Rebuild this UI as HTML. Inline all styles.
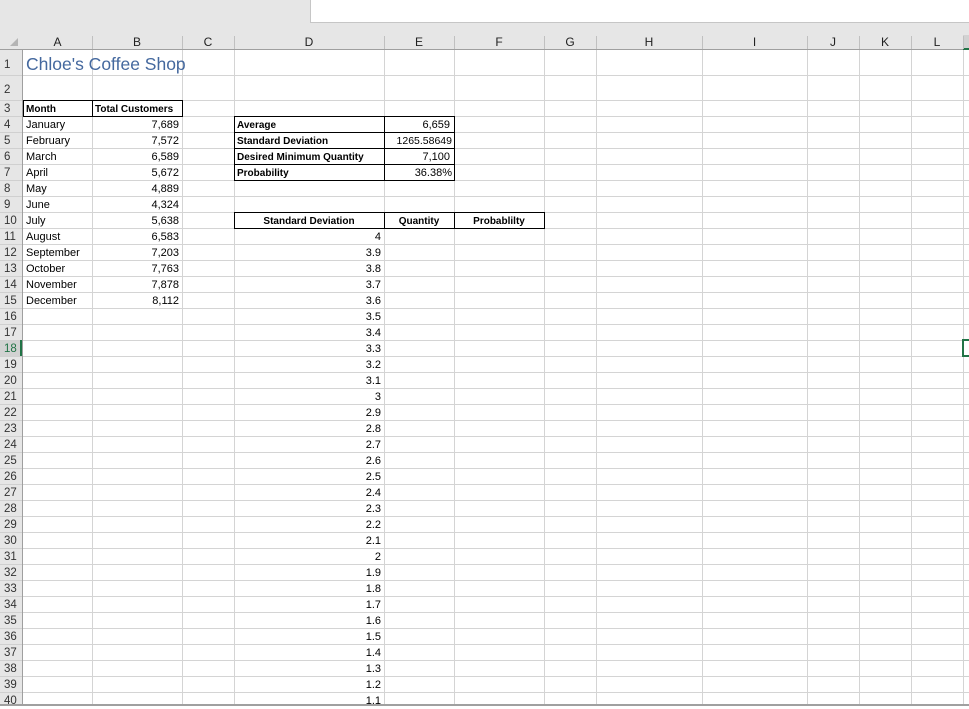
<!DOCTYPE html>
<html><head><meta charset="utf-8"><style>
*{margin:0;padding:0;box-sizing:border-box}
body{width:969px;height:706px;overflow:hidden;background:#fff;position:relative;font-family:"Liberation Sans",Arial,sans-serif;font-size:11px;color:#000}
.a{position:absolute}
.v{position:absolute;top:50px;width:1px;height:656px;background:#d4d4d4}
.t{position:absolute;height:16px;line-height:16px;white-space:nowrap;font-size:11px;padding-top:1px}
.b{font-weight:bold;font-size:10px;padding-top:2px}
.r{text-align:right}
.c{text-align:center}
.box{position:absolute;border:1px solid #000}
.rh{position:absolute;left:0;width:23px;font-size:11.5px;color:#333;padding-left:4px;padding-top:1px;line-height:16px;height:16px}
.ch{position:absolute;top:35px;height:15px;line-height:15px;text-align:center;font-size:12px;color:#222}
</style></head><body>
<div class="a" style="left:0;top:0;width:969px;height:50px;background:#e6e6e6"></div>
<div class="a" style="left:310px;top:0;width:659px;height:23px;background:#fff;border-left:1px solid #c6c6c6;border-bottom:1px solid #c6c6c6"></div>
<div class="a" style="left:0;top:49px;width:963px;height:1px;background:#9f9f9f"></div>
<div class="a" style="left:963px;top:48px;width:6px;height:2px;background:#217346"></div>
<div class="a" style="left:963px;top:35px;width:6px;height:13px;background:#d2d2d2"></div>
<div class="a" style="left:10px;top:38px;width:0;height:0;border-left:8px solid transparent;border-bottom:8px solid #b4b4b4"></div>
<div class="a" style="left:92px;top:36px;width:1px;height:13px;background:#c0c0c0"></div>
<div class="a" style="left:182px;top:36px;width:1px;height:13px;background:#c0c0c0"></div>
<div class="a" style="left:234px;top:36px;width:1px;height:13px;background:#c0c0c0"></div>
<div class="a" style="left:384px;top:36px;width:1px;height:13px;background:#c0c0c0"></div>
<div class="a" style="left:454px;top:36px;width:1px;height:13px;background:#c0c0c0"></div>
<div class="a" style="left:544px;top:36px;width:1px;height:13px;background:#c0c0c0"></div>
<div class="a" style="left:596px;top:36px;width:1px;height:13px;background:#c0c0c0"></div>
<div class="a" style="left:702px;top:36px;width:1px;height:13px;background:#c0c0c0"></div>
<div class="a" style="left:807px;top:36px;width:1px;height:13px;background:#c0c0c0"></div>
<div class="a" style="left:859px;top:36px;width:1px;height:13px;background:#c0c0c0"></div>
<div class="a" style="left:911px;top:36px;width:1px;height:13px;background:#c0c0c0"></div>
<div class="a" style="left:963px;top:36px;width:1px;height:13px;background:#c0c0c0"></div>
<div class="ch" style="left:23px;width:69px">A</div>
<div class="ch" style="left:92px;width:90px">B</div>
<div class="ch" style="left:182px;width:52px">C</div>
<div class="ch" style="left:234px;width:150px">D</div>
<div class="ch" style="left:384px;width:70px">E</div>
<div class="ch" style="left:454px;width:90px">F</div>
<div class="ch" style="left:544px;width:52px">G</div>
<div class="ch" style="left:596px;width:106px">H</div>
<div class="ch" style="left:702px;width:105px">I</div>
<div class="ch" style="left:807px;width:52px">J</div>
<div class="ch" style="left:859px;width:52px">K</div>
<div class="ch" style="left:911px;width:52px">L</div>
<div class="a" style="left:0;top:50px;width:23px;height:656px;background:#e6e6e6;border-right:1px solid #9f9f9f"></div>
<div class="a" style="left:0;top:100px;width:22px;height:606px;background:repeating-linear-gradient(to bottom,#d0d0d0 0,#d0d0d0 1px,transparent 1px,transparent 16px)"></div>
<div class="a" style="left:0;top:75px;width:22px;height:1px;background:#d0d0d0"></div>
<div class="a" style="left:0;top:341px;width:20px;height:15px;background:#d2d2d2"></div>
<div class="a" style="left:20px;top:340px;width:2px;height:16px;background:#217346"></div>
<div class="a" style="left:23px;top:75px;width:946px;height:1px;background:#d4d4d4"></div>
<div class="a" style="left:23px;top:100px;width:946px;height:606px;background:repeating-linear-gradient(to bottom,#d4d4d4 0,#d4d4d4 1px,transparent 1px,transparent 16px)"></div>
<div class="v" style="left:92px"></div><div class="v" style="left:182px"></div><div class="v" style="left:234px"></div>
<div class="v" style="left:384px"></div><div class="v" style="left:454px"></div><div class="v" style="left:544px"></div>
<div class="v" style="left:596px"></div><div class="v" style="left:702px"></div><div class="v" style="left:807px"></div>
<div class="v" style="left:859px"></div><div class="v" style="left:911px"></div><div class="v" style="left:963px"></div>
<div class="rh" style="top:56px">1</div>
<div class="rh" style="top:81px">2</div>
<div class="a" style="left:26px;top:52px;font-size:17.5px;color:#44689e;line-height:24px;white-space:nowrap">Chloe's Coffee Shop</div>
<div class="rh" style="top:100px">3</div><div class="rh" style="top:116px">4</div><div class="rh" style="top:132px">5</div><div class="rh" style="top:148px">6</div><div class="rh" style="top:164px">7</div><div class="rh" style="top:180px">8</div><div class="rh" style="top:196px">9</div><div class="rh" style="top:212px">10</div><div class="rh" style="top:228px">11</div><div class="rh" style="top:244px">12</div><div class="rh" style="top:260px">13</div><div class="rh" style="top:276px">14</div><div class="rh" style="top:292px">15</div><div class="rh" style="top:308px">16</div><div class="rh" style="top:324px">17</div><div class="rh" style="top:340px;color:#217346">18</div><div class="rh" style="top:356px">19</div><div class="rh" style="top:372px">20</div><div class="rh" style="top:388px">21</div><div class="rh" style="top:404px">22</div><div class="rh" style="top:420px">23</div><div class="rh" style="top:436px">24</div><div class="rh" style="top:452px">25</div><div class="rh" style="top:468px">26</div><div class="rh" style="top:484px">27</div><div class="rh" style="top:500px">28</div><div class="rh" style="top:516px">29</div><div class="rh" style="top:532px">30</div><div class="rh" style="top:548px">31</div><div class="rh" style="top:564px">32</div><div class="rh" style="top:580px">33</div><div class="rh" style="top:596px">34</div><div class="rh" style="top:612px">35</div><div class="rh" style="top:628px">36</div><div class="rh" style="top:644px">37</div><div class="rh" style="top:660px">38</div><div class="rh" style="top:676px">39</div><div class="rh" style="top:692px">40</div>
<div class="a" style="left:962px;top:339px;width:8px;height:18px;border:2px solid #217346;border-right:none"></div>
<div class="box" style="left:23px;top:100px;width:70px;height:17px"></div>
<div class="box" style="left:92px;top:100px;width:91px;height:17px"></div>
<div class="t b" style="left:26px;top:100px">Month</div>
<div class="t b" style="left:95px;top:100px">Total Customers</div>
<div class="t" style="left:26px;top:116px">January</div><div class="t r" style="left:92px;width:87px;top:116px">7,689</div>
<div class="t" style="left:26px;top:132px">February</div><div class="t r" style="left:92px;width:87px;top:132px">7,572</div>
<div class="t" style="left:26px;top:148px">March</div><div class="t r" style="left:92px;width:87px;top:148px">6,589</div>
<div class="t" style="left:26px;top:164px">April</div><div class="t r" style="left:92px;width:87px;top:164px">5,672</div>
<div class="t" style="left:26px;top:180px">May</div><div class="t r" style="left:92px;width:87px;top:180px">4,889</div>
<div class="t" style="left:26px;top:196px">June</div><div class="t r" style="left:92px;width:87px;top:196px">4,324</div>
<div class="t" style="left:26px;top:212px">July</div><div class="t r" style="left:92px;width:87px;top:212px">5,638</div>
<div class="t" style="left:26px;top:228px">August</div><div class="t r" style="left:92px;width:87px;top:228px">6,583</div>
<div class="t" style="left:26px;top:244px">September</div><div class="t r" style="left:92px;width:87px;top:244px">7,203</div>
<div class="t" style="left:26px;top:260px">October</div><div class="t r" style="left:92px;width:87px;top:260px">7,763</div>
<div class="t" style="left:26px;top:276px">November</div><div class="t r" style="left:92px;width:87px;top:276px">7,878</div>
<div class="t" style="left:26px;top:292px">December</div><div class="t r" style="left:92px;width:87px;top:292px">8,112</div>
<div class="a" style="left:234px;top:116px;width:151px;height:65px;border:1px solid #000;background:repeating-linear-gradient(to bottom,transparent 0,transparent 15px,#000 15px,#000 16px)"></div>
<div class="a" style="left:384px;top:116px;width:71px;height:65px;border:1px solid #000;background:repeating-linear-gradient(to bottom,transparent 0,transparent 15px,#000 15px,#000 16px)"></div>
<div class="t b" style="left:237px;top:116px">Average</div><div class="t r" style="left:384px;width:66px;top:116px">6,659</div>
<div class="t b" style="left:237px;top:132px">Standard Deviation</div><div class="t r" style="left:384px;width:68px;top:132px;font-size:10.5px">1265.58649</div>
<div class="t b" style="left:237px;top:148px">Desired Minimum Quantity</div><div class="t r" style="left:384px;width:66px;top:148px">7,100</div>
<div class="t b" style="left:237px;top:164px">Probability</div><div class="t r" style="left:384px;width:68px;top:164px">36.38%</div>
<div class="box" style="left:234px;top:212px;width:151px;height:17px"></div>
<div class="box" style="left:384px;top:212px;width:71px;height:17px"></div>
<div class="box" style="left:454px;top:212px;width:91px;height:17px"></div>
<div class="t b c" style="left:234px;width:150px;top:212px">Standard Deviation</div>
<div class="t b c" style="left:384px;width:70px;top:212px">Quantity</div>
<div class="t b c" style="left:454px;width:90px;top:212px">Probablilty</div>
<div class="t r" style="left:234px;width:147px;top:228px">4</div>
<div class="t r" style="left:234px;width:147px;top:244px">3.9</div>
<div class="t r" style="left:234px;width:147px;top:260px">3.8</div>
<div class="t r" style="left:234px;width:147px;top:276px">3.7</div>
<div class="t r" style="left:234px;width:147px;top:292px">3.6</div>
<div class="t r" style="left:234px;width:147px;top:308px">3.5</div>
<div class="t r" style="left:234px;width:147px;top:324px">3.4</div>
<div class="t r" style="left:234px;width:147px;top:340px">3.3</div>
<div class="t r" style="left:234px;width:147px;top:356px">3.2</div>
<div class="t r" style="left:234px;width:147px;top:372px">3.1</div>
<div class="t r" style="left:234px;width:147px;top:388px">3</div>
<div class="t r" style="left:234px;width:147px;top:404px">2.9</div>
<div class="t r" style="left:234px;width:147px;top:420px">2.8</div>
<div class="t r" style="left:234px;width:147px;top:436px">2.7</div>
<div class="t r" style="left:234px;width:147px;top:452px">2.6</div>
<div class="t r" style="left:234px;width:147px;top:468px">2.5</div>
<div class="t r" style="left:234px;width:147px;top:484px">2.4</div>
<div class="t r" style="left:234px;width:147px;top:500px">2.3</div>
<div class="t r" style="left:234px;width:147px;top:516px">2.2</div>
<div class="t r" style="left:234px;width:147px;top:532px">2.1</div>
<div class="t r" style="left:234px;width:147px;top:548px">2</div>
<div class="t r" style="left:234px;width:147px;top:564px">1.9</div>
<div class="t r" style="left:234px;width:147px;top:580px">1.8</div>
<div class="t r" style="left:234px;width:147px;top:596px">1.7</div>
<div class="t r" style="left:234px;width:147px;top:612px">1.6</div>
<div class="t r" style="left:234px;width:147px;top:628px">1.5</div>
<div class="t r" style="left:234px;width:147px;top:644px">1.4</div>
<div class="t r" style="left:234px;width:147px;top:660px">1.3</div>
<div class="t r" style="left:234px;width:147px;top:676px">1.2</div>
<div class="t r" style="left:234px;width:147px;top:692px">1.1</div>
<div class="a" style="left:0;top:704px;width:969px;height:2px;background:#a0a0a0"></div>
</body></html>
